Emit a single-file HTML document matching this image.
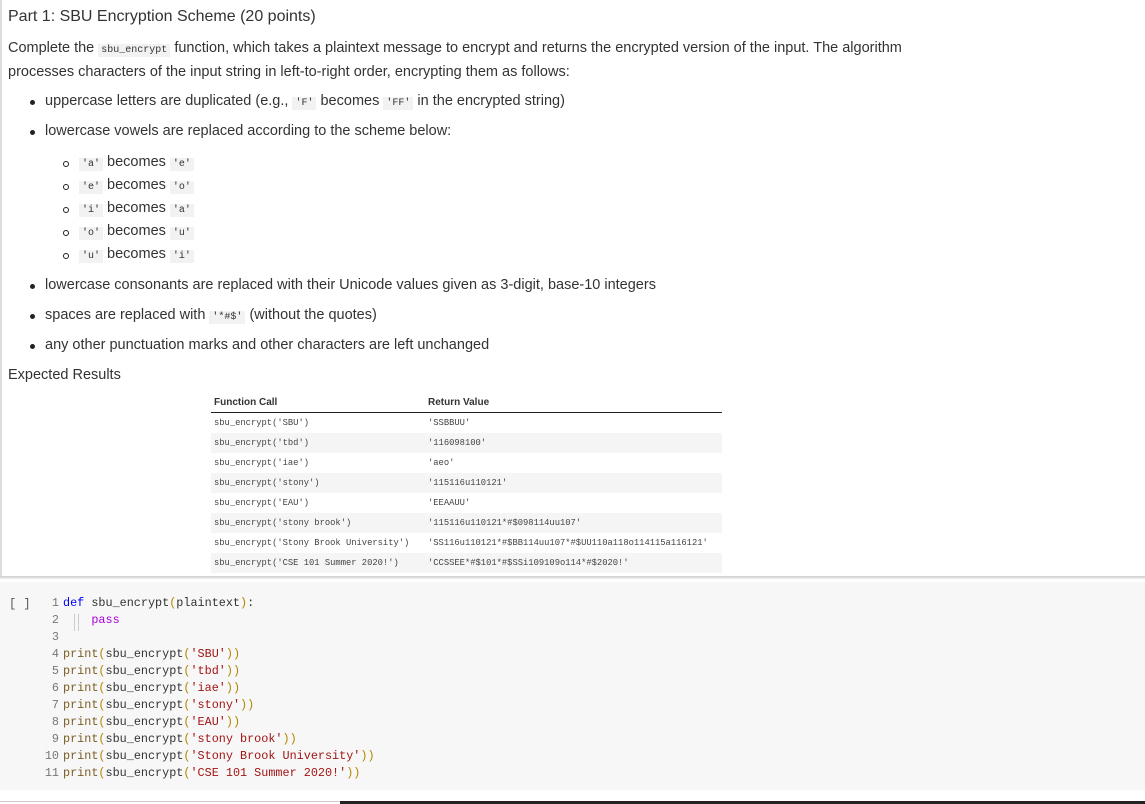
<!DOCTYPE html>
<html><head><style>
body{margin:0;width:1145px;height:804px;background:#fff;font-family:"Liberation Sans",sans-serif;color:#333;position:relative;overflow:hidden}
.t{position:absolute;white-space:nowrap;font-size:14.5px}
code,.m{font-family:"Liberation Mono",monospace}
code{background:#f2f2f2;font-size:10px;padding:1px 3px;color:#333}
.dot{position:absolute;width:5px;height:5px;border-radius:50%;background:#222}
.ring{position:absolute;width:4px;height:4px;border-radius:50%;border:1px solid #222}
table{position:absolute;left:211px;top:392px;width:511px;border-collapse:collapse;font-size:9px}
th{text-align:left;font-size:10px;font-weight:bold;height:20px;border-bottom:1px solid #222;padding:0 3px}
td{height:20px;padding:0 3px;font-family:"Liberation Mono",monospace;color:#444;font-size:8.8px}
tr:nth-child(odd) td{background:#f5f5f5}
.code{position:absolute;left:0;top:582px;width:1145px;height:208px;background:#f7f7f7}
.cl{position:absolute;font-family:"Liberation Mono",monospace;font-size:11.8px;white-space:pre;left:63px}
.ln{position:absolute;font-family:"Liberation Mono",monospace;font-size:11.8px;color:#777;text-align:right;width:20px;left:39px}
.p{color:#795e26}.s{color:#a31515}.b{color:#b08800}
</style></head><body>
<div style="position:absolute;left:0;top:0;width:2px;height:577px;background:#ddd"></div>
<div style="position:absolute;left:0;top:576px;width:1145px;height:3px;background:linear-gradient(#ccc,#f0f0f0)"></div>
<div class="t" style="left:8px;top:8px;font-size:16px">Part 1: SBU Encryption Scheme (20 points)</div>
<div class="t" style="left:8px;top:40px">Complete the <code>sbu_encrypt</code> function, which takes a plaintext message to encrypt and returns the encrypted version of the input. The algorithm</div>
<div class="t" style="left:8px;top:64px">processes characters of the input string in left-to-right order, encrypting them as follows:</div>
<div class="dot" style="left:30px;top:100px"></div><div class="t" style="left:45px;top:93px">uppercase letters are duplicated (e.g., <code>'F'</code> becomes <code>'FF'</code> in the encrypted string)</div>
<div class="dot" style="left:30px;top:130px"></div><div class="t" style="left:45px;top:123px">lowercase vowels are replaced according to the scheme below:</div>
<div class="ring" style="left:63px;top:161px"></div><div class="t" style="left:79px;top:154px"><code>'a'</code> becomes <code>'e'</code></div>
<div class="ring" style="left:63px;top:184px"></div><div class="t" style="left:79px;top:177px"><code>'e'</code> becomes <code>'o'</code></div>
<div class="ring" style="left:63px;top:207px"></div><div class="t" style="left:79px;top:200px"><code>'i'</code> becomes <code>'a'</code></div>
<div class="ring" style="left:63px;top:230px"></div><div class="t" style="left:79px;top:223px"><code>'o'</code> becomes <code>'u'</code></div>
<div class="ring" style="left:63px;top:253px"></div><div class="t" style="left:79px;top:246px"><code>'u'</code> becomes <code>'i'</code></div>
<div class="dot" style="left:30px;top:284px"></div><div class="t" style="left:45px;top:277px">lowercase consonants are replaced with their Unicode values given as 3-digit, base-10 integers</div>
<div class="dot" style="left:30px;top:314px"></div><div class="t" style="left:45px;top:307px">spaces are replaced with <code>'*#$'</code> (without the quotes)</div>
<div class="dot" style="left:30px;top:344px"></div><div class="t" style="left:45px;top:337px">any other punctuation marks and other characters are left unchanged</div>
<div class="t" style="left:8px;top:367px">Expected Results</div>
<table>
<tr><th style="width:208px">Function Call</th><th>Return Value</th></tr>
<tr><td>sbu_encrypt('SBU')</td><td>'SSBBUU'</td></tr>
<tr><td>sbu_encrypt('tbd')</td><td>'116098100'</td></tr>
<tr><td>sbu_encrypt('iae')</td><td>'aeo'</td></tr>
<tr><td>sbu_encrypt('stony')</td><td>'115116u110121'</td></tr>
<tr><td>sbu_encrypt('EAU')</td><td>'EEAAUU'</td></tr>
<tr><td>sbu_encrypt('stony brook')</td><td>'115116u110121*#$098114uu107'</td></tr>
<tr><td>sbu_encrypt('Stony Brook University')</td><td>'SS116u110121*#$BB114uu107*#$UU110a118o114115a116121'</td></tr>
<tr><td>sbu_encrypt('CSE 101 Summer 2020!')</td><td>'CCSSEE*#$101*#$SSi109109o114*#$2020!'</td></tr>
</table>
<div class="code">
<div class="m" style="position:absolute;left:9px;top:15px;font-size:12px;color:#555">[ ]</div>
</div>
<div style="position:absolute;left:74px;top:614px;width:1px;height:17px;background:#ccc"></div>
<div style="position:absolute;left:78px;top:614px;width:1px;height:17px;background:#ccc"></div>
<div class="ln" style="top:596px">1</div><div class="cl" style="top:596px"><span style="color:#00f">def</span> sbu_encrypt<span class="b">(</span>plaintext<span class="b">)</span>:</div>
<div class="ln" style="top:613px">2</div><div class="cl" style="top:613px">    <span style="color:#af00db">pass</span></div>
<div class="ln" style="top:630px">3</div>
<div class="ln" style="top:647px">4</div><div class="cl" style="top:647px"><span class="p">print</span><span class="b">(</span>sbu_encrypt<span class="b">(</span><span class="s">'SBU'</span><span class="b">))</span></div>
<div class="ln" style="top:664px">5</div><div class="cl" style="top:664px"><span class="p">print</span><span class="b">(</span>sbu_encrypt<span class="b">(</span><span class="s">'tbd'</span><span class="b">))</span></div>
<div class="ln" style="top:681px">6</div><div class="cl" style="top:681px"><span class="p">print</span><span class="b">(</span>sbu_encrypt<span class="b">(</span><span class="s">'iae'</span><span class="b">))</span></div>
<div class="ln" style="top:698px">7</div><div class="cl" style="top:698px"><span class="p">print</span><span class="b">(</span>sbu_encrypt<span class="b">(</span><span class="s">'stony'</span><span class="b">))</span></div>
<div class="ln" style="top:715px">8</div><div class="cl" style="top:715px"><span class="p">print</span><span class="b">(</span>sbu_encrypt<span class="b">(</span><span class="s">'EAU'</span><span class="b">))</span></div>
<div class="ln" style="top:732px">9</div><div class="cl" style="top:732px"><span class="p">print</span><span class="b">(</span>sbu_encrypt<span class="b">(</span><span class="s">'stony brook'</span><span class="b">))</span></div>
<div class="ln" style="top:749px">10</div><div class="cl" style="top:749px"><span class="p">print</span><span class="b">(</span>sbu_encrypt<span class="b">(</span><span class="s">'Stony Brook University'</span><span class="b">))</span></div>
<div class="ln" style="top:766px">11</div><div class="cl" style="top:766px"><span class="p">print</span><span class="b">(</span>sbu_encrypt<span class="b">(</span><span class="s">'CSE 101 Summer 2020!'</span><span class="b">))</span></div>
<div style="position:absolute;left:0;top:801px;width:1145px;height:1px;background:#ccc"></div>
<div style="position:absolute;left:340px;top:801px;width:805px;height:3px;background:#222"></div>
</body></html>
